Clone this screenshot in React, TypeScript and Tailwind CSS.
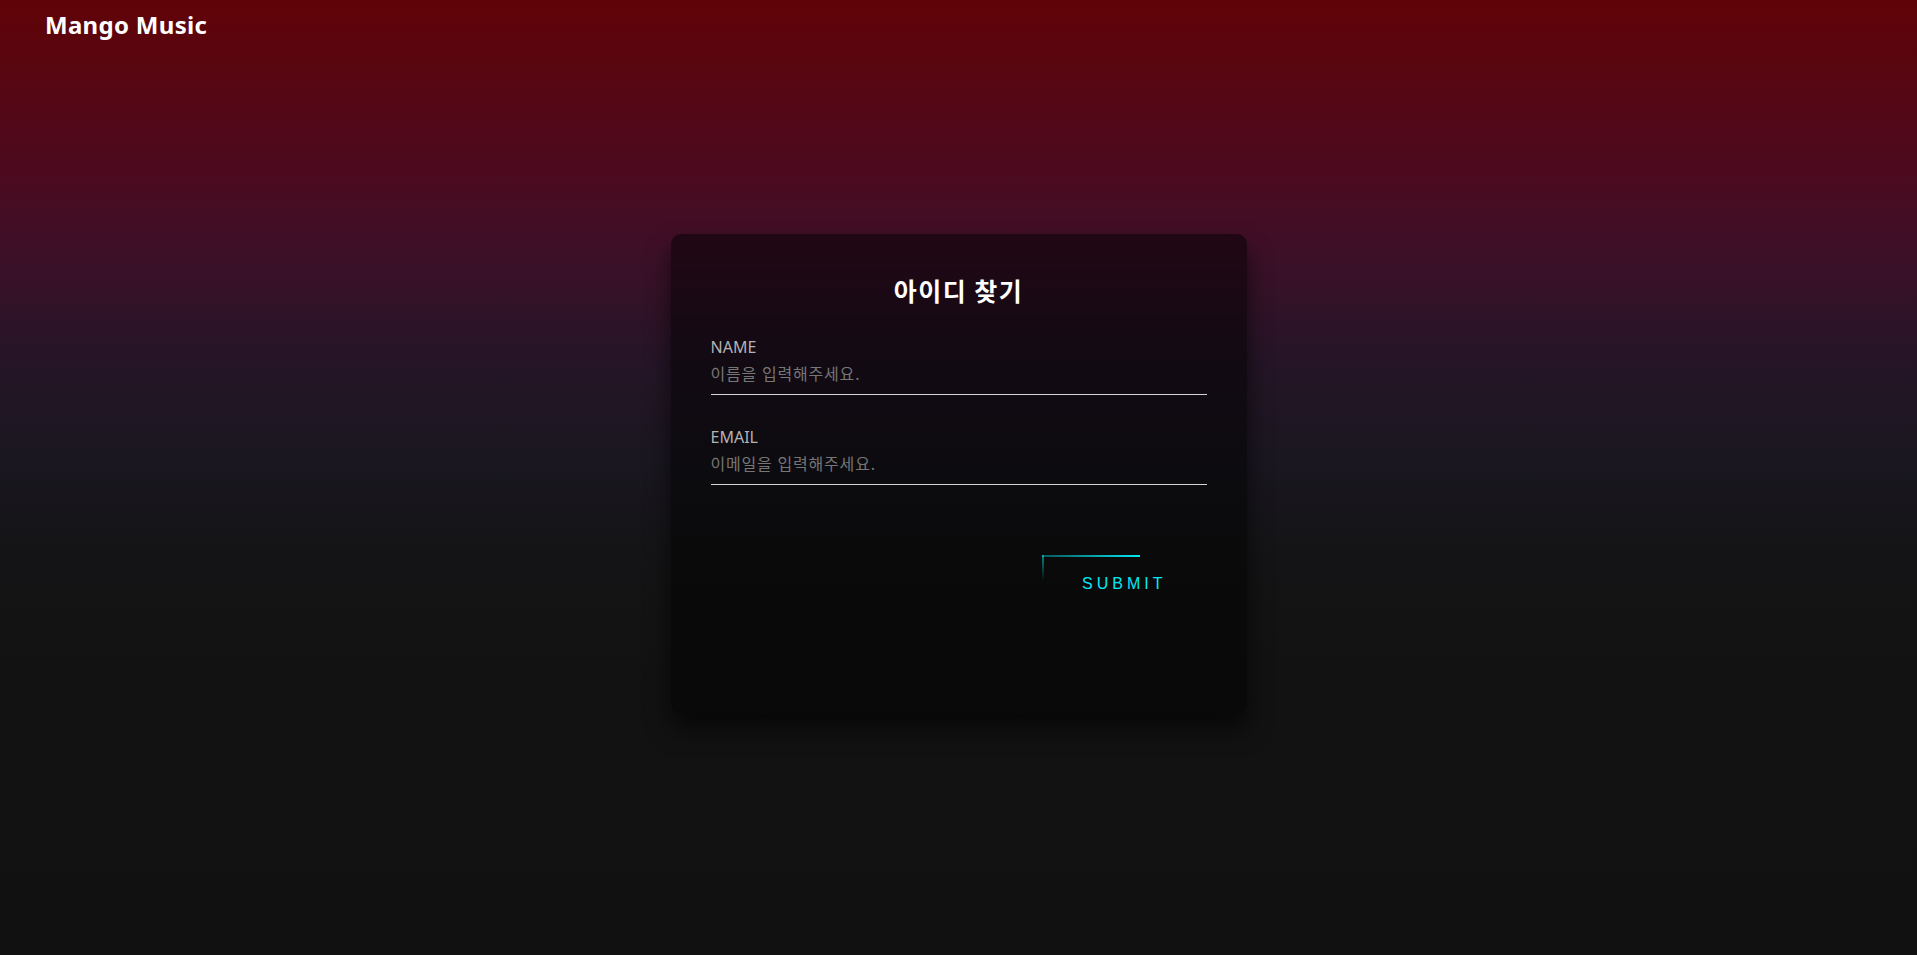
import { useState } from 'react';

const latin = "font-['Noto_Sans','Noto_Sans_CJK_KR',sans-serif]";

interface FieldProps {
  label: string;
  type: string;
  placeholder: string;
}

const Field = ({ label, type, placeholder }: FieldProps) => {
  const [value, setValue] = useState('');
  return (
    <div className="flex flex-col mb-[30px]">
      <label className={`${latin} text-base leading-6 text-[#b3b3b3]`}>{label}</label>
      <input
        type={type}
        value={value}
        onChange={(e) => setValue(e.target.value)}
        placeholder={placeholder}
        className={`${latin} w-full bg-transparent pt-[3px] pb-2 text-base leading-6 tracking-[0.8px] text-white placeholder:text-[#767676] border-b border-[#d4d4d4] outline-none`}
      />
    </div>
  );
};

export default function App() {
  return (
    <div className="relative min-h-screen w-full bg-[linear-gradient(180deg,#600307_0%,#4c0a1f_18%,#3a1129_28%,#251527_38%,#1a1720_48%,#141416_58%,#121212_70%,#111111_100%)] flex items-center justify-center pb-[7px]">
      {/* Header */}
      <header className="absolute top-0 left-0 pl-[45px] pt-[9px]">
        <h1 className={`${latin} text-2xl leading-8 font-bold tracking-[0.3px] text-white`}>Mango Music</h1>
      </header>

      {/* Find ID Card */}
      <div className="w-[576px] h-[480px] rounded-[10px] bg-black/50 shadow-[0_15px_25px_rgba(0,0,0,0.6)] px-10 pt-10 flex flex-col">
        <h2 className="font-['Noto_Sans_CJK_KR',sans-serif] text-[25px] leading-8 font-bold tracking-[1.5px] text-white text-center mb-[29px]">
          아이디 찾기
        </h2>

        <form className="flex flex-col" onSubmit={(e) => e.preventDefault()}>
          <Field label="NAME" type="text" placeholder="이름을 입력해주세요." />
          <Field label="EMAIL" type="email" placeholder="이메일을 입력해주세요." />

          <div className="flex justify-end mt-10">
            <button
              type="submit"
              className="relative overflow-hidden px-10 pt-[17px] pb-[15px] font-['Liberation_Sans',Arial,sans-serif] text-base leading-6 tracking-[4px] uppercase text-[#03e9f4]"
            >
              <span className="absolute top-0 left-0 h-[2px] w-[98px] bg-[linear-gradient(90deg,rgba(3,233,244,0.35),#03e9f4)]"></span>
              <span className="absolute top-0 left-0 w-[2px] h-[26px] bg-[linear-gradient(180deg,rgba(3,233,244,0.55),transparent)]"></span>
              Submit
            </button>
          </div>
        </form>
      </div>
    </div>
  );
}
